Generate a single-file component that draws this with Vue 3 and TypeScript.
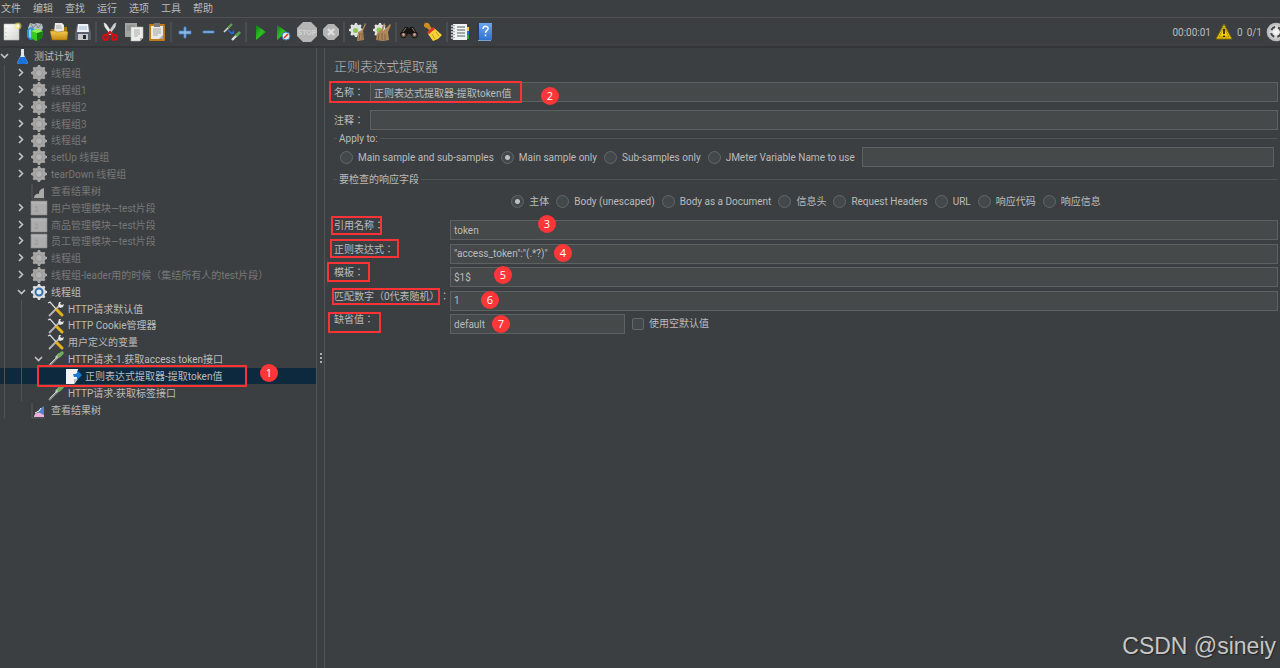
<script setup lang="ts">
import { ref } from 'vue'

interface TreeNode {
  label: string
  depth: number
  icon: string
  state?: 'open' | 'closed'
  off?: boolean
  selected?: boolean
}
interface Box { x: number; y: number; w: number; h: number }
interface Badge { n: number; x: number; y: number }

const menus = ['文件', '编辑', '查找', '运行', '选项', '工具', '帮助']

const tools: { id: string; title: string; text?: string }[][] = [
  [
    { id: 'new', title: '新建' },
    { id: 'templates', title: '模板' },
    { id: 'open', title: '打开' },
    { id: 'save', title: '保存' },
  ],
  [
    { id: 'cut', title: '剪切' },
    { id: 'copy', title: '复制' },
    { id: 'paste', title: '粘贴' },
  ],
  [
    { id: 'plus', title: '全部展开' },
    { id: 'minus', title: '全部折叠' },
    { id: 'toggle', title: '切换' },
  ],
  [
    { id: 'start', title: '启动' },
    { id: 'startnow', title: '不停顿开始' },
    { id: 'stop', title: '停止', text: 'STOP' },
    { id: 'shutdown', title: '关闭' },
  ],
  [
    { id: 'clear', title: '清除' },
    { id: 'clearall', title: '清除全部' },
  ],
  [
    { id: 'search', title: '查找' },
    { id: 'broom', title: '重置搜索' },
  ],
  [
    { id: 'functions', title: '函数助手' },
    { id: 'help', title: '帮助' },
  ],
]

const nodes: TreeNode[] = [
  { label: '测试计划', depth: 0, icon: 'flask', state: 'open' },
  { label: '线程组', depth: 1, icon: 'gearoff', state: 'closed', off: true },
  { label: '线程组1', depth: 1, icon: 'gearoff', state: 'closed', off: true },
  { label: '线程组2', depth: 1, icon: 'gearoff', state: 'closed', off: true },
  { label: '线程组3', depth: 1, icon: 'gearoff', state: 'closed', off: true },
  { label: '线程组4', depth: 1, icon: 'gearoff', state: 'closed', off: true },
  { label: 'setUp 线程组', depth: 1, icon: 'gearoff', state: 'closed', off: true },
  { label: 'tearDown 线程组', depth: 1, icon: 'gearoff', state: 'closed', off: true },
  { label: '查看结果树', depth: 1, icon: 'chartoff', off: true },
  { label: '用户管理模块—test片段', depth: 1, icon: 'fragment', state: 'closed', off: true },
  { label: '商品管理模块—test片段', depth: 1, icon: 'fragment', state: 'closed', off: true },
  { label: '员工管理模块—test片段', depth: 1, icon: 'fragment', state: 'closed', off: true },
  { label: '线程组', depth: 1, icon: 'gearoff', state: 'closed', off: true },
  { label: '线程组-leader用的时候（集结所有人的test片段）', depth: 1, icon: 'gearoff', state: 'closed', off: true },
  { label: '线程组', depth: 1, icon: 'gear', state: 'open' },
  { label: 'HTTP请求默认值', depth: 2, icon: 'wrench' },
  { label: 'HTTP Cookie管理器', depth: 2, icon: 'wrench' },
  { label: '用户定义的变量', depth: 2, icon: 'wrench' },
  { label: 'HTTP请求-1.获取access token接口', depth: 2, icon: 'dropper', state: 'open' },
  { label: '正则表达式提取器-提取token值', depth: 3, icon: 'extract', selected: true },
  { label: 'HTTP请求-获取标签接口', depth: 2, icon: 'dropper' },
  { label: '查看结果树', depth: 1, icon: 'chart' },
]

const scopes = ['Main sample and sub-samples', 'Main sample only', 'Sub-samples only', 'JMeter Variable Name to use']
const targets = ['主体', 'Body (unescaped)', 'Body as a Document', '信息头', 'Request Headers', 'URL', '响应代码', '响应信息']

const scope = ref('Main sample only')
const target = ref('主体')
const name = ref('正则表达式提取器-提取token值')
const comment = ref('')
const variable = ref('')
const emptyDefault = ref(false)

const fields = ref([
  { id: 'refname', label: '引用名称：', value: 'token' },
  { id: 'regex', label: '正则表达式：', value: '"access_token":"(.*?)"' },
  { id: 'template', label: '模板：', value: '$1$' },
  { id: 'match', label: '匹配数字（0代表随机）：', value: '1' },
  { id: 'default', label: '缺省值：', value: 'default' },
])

const boxes: Box[] = [
  { x: 37, y: 365, w: 210, h: 22 },
  { x: 329, y: 81, w: 193, h: 22 },
  { x: 331, y: 216, w: 51, h: 19 },
  { x: 330, y: 239, w: 69, h: 19 },
  { x: 327, y: 262, w: 43, h: 20 },
  { x: 332, y: 288, w: 108, h: 17 },
  { x: 328, y: 312, w: 53, h: 21 },
]
const badges: Badge[] = [
  { n: 1, x: 260, y: 364 },
  { n: 2, x: 541, y: 87 },
  { n: 3, x: 538, y: 215 },
  { n: 4, x: 554, y: 244 },
  { n: 5, x: 494, y: 266 },
  { n: 6, x: 481, y: 291 },
  { n: 7, x: 492, y: 315 },
]
const teeth = [0, 45, 90, 135, 180, 225, 270, 315]
</script>

<template>
  <div class="app">
    <svg class="sprite" aria-hidden="true">
      <defs>
        <linearGradient id="gold" x1="0" y1="0" x2="0" y2="1"><stop offset="0" stop-color="#f3ca52" /><stop offset="1" stop-color="#c48a12" /></linearGradient>
        <linearGradient id="green" x1="0" y1="0" x2="1" y2="1"><stop offset="0" stop-color="#0b7d12" /><stop offset="0.5" stop-color="#2fc022" /><stop offset="1" stop-color="#067a0c" /></linearGradient>
        <linearGradient id="paper" x1="0" y1="0" x2="1" y2="1"><stop offset="0" stop-color="#ffffff" /><stop offset="1" stop-color="#d4d4d0" /></linearGradient>
        <linearGradient id="book" x1="0" y1="0" x2="0" y2="1"><stop offset="0" stop-color="#6ba5ee" /><stop offset="1" stop-color="#2f72cf" /></linearGradient>
        <radialGradient id="ball"><stop offset="0" stop-color="#ffffff" /><stop offset="1" stop-color="#b4b4b4" /></radialGradient>
      </defs>
      <symbol id="i-new" viewBox="0 0 20 20">
        <path d="M2 2h15v16H2z" fill="url(#paper)" stroke="#b9b9b4" stroke-width=".6" />
        <path d="M4 6v10" stroke="#bdbdbd" stroke-dasharray="1 3" />
        <circle cx="16" cy="4" r="3.500" fill="#f3e46b" opacity=".6" /><circle cx="16" cy="4" r="1.700" fill="#fffbd0" />
      </symbol>
      <symbol id="i-templates" viewBox="0 0 20 20">
        <path d="M3 6l2-5 4 1 3-1 5 1 1 4-3 4H5z" fill="#b7bec2" /><path d="M6 2l2 4 3-4 2 4 3-4" fill="none" stroke="#7f898e" />
        <path d="M2 8l4-3 3 2v10l-4 1-3-3z" fill="#2696dd" /><path d="M4 8l2-1v9l-2-1z" fill="#8cd2fb" />
        <path d="M6 9l6-2 6 2-1 7-6 3-5-3z" fill="#35c91e" /><path d="M12 11l6-2-1 7-5 3z" fill="#15800f" /><path d="M6 9l6-2 6 2-6 2z" fill="#8ff05c" />
      </symbol>
      <symbol id="i-open" viewBox="0 0 20 20">
        <path d="M2 7h5l1-2h10v12H3z" fill="#a6760d" /><path d="M6 1h7l2 2v7H5z" fill="#e8e9e7" /><path d="M7 4h5M7 6h6" stroke="#9b9b9b" stroke-width=".8" />
        <path d="M1 9h5l2 1 9-1 2 1-1 8H3z" fill="url(#gold)" stroke="#93660a" stroke-width=".5" />
      </symbol>
      <symbol id="i-save" viewBox="0 0 20 20">
        <path d="M4 2h12l2 9v7H2v-7z" fill="#59626a" /><path d="M5 2h10l1 8H4z" fill="#edf2f7" /><path d="M6 5h8M6 7h8" stroke="#a5bad0" />
        <path d="M5 12h10v6H5z" fill="#c5c7c8" /><path d="M10 13h3v4h-3z" fill="#252a2e" />
      </symbol>
      <symbol id="i-cut" viewBox="0 0 20 20">
        <path d="M4 1l1 4 6 8 1-2L6 2z" fill="#eceded" stroke="#eceded" stroke-width=".6" /><path d="M16 1l-1 4-6 8-1-2 6-9z" fill="#cfd2d3" stroke="#cfd2d3" stroke-width=".6" />
        <circle cx="5.500" cy="15.500" r="2.300" fill="none" stroke="#d60c12" stroke-width="2.200" /><circle cx="14.500" cy="15.500" r="2.300" fill="none" stroke="#d60c12" stroke-width="2.200" />
        <path d="M7 13l3-3 3 3" fill="none" stroke="#d60c12" stroke-width="2" />
      </symbol>
      <symbol id="i-copy" viewBox="0 0 20 20">
        <path d="M1 1h12v14H1z" fill="#a2a4a3" /><path d="M3 4h8M3 6h8M3 8h4" stroke="#777" stroke-width=".8" />
        <path d="M7 5h12v11l-3 3H7z" fill="#ededeb" stroke="#b5b5b2" stroke-width=".6" /><path d="M10 8h6M10 10h6M10 12h6M10 14h4" stroke="#9d9d9b" stroke-width=".8" /><path d="M19 16h-3v3z" fill="#aaa" />
      </symbol>
      <symbol id="i-paste" viewBox="0 0 20 20">
        <rect x="2" y="2" width="16" height="17" rx="1" fill="#c17a19" /><path d="M4 4h12v13H4z" fill="#e9e9e6" /><path d="M7 1h6v4H7z" fill="#777b7b" />
        <path d="M6 7h8M6 9h8M6 11h8M6 13h5" stroke="#969696" stroke-width=".8" /><path d="M16 13v4h-4z" fill="#aaa" />
      </symbol>
      <symbol id="i-plus" viewBox="0 0 20 20"><path d="M9 5h2v4h5v3h-5v4H9v-4H4V9h5z" fill="#8ab6e8" stroke="#4a80c2" stroke-width=".8" /></symbol>
      <symbol id="i-minus" viewBox="0 0 20 20"><path d="M4 9h11v2H4z" fill="#8ab6e8" stroke="#4a80c2" stroke-width=".8" /></symbol>
      <symbol id="i-toggle" viewBox="0 0 20 20">
        <path d="M2 10l7-7" stroke="#d8dbd7" stroke-width="1.600" /><path d="M6 6l4-4" stroke="#58a44c" stroke-width="2.200" />
        <path d="M10 18l6-6" stroke="#d8dbd7" stroke-width="2.400" /><path d="M14 14l4-4" stroke="#58a44c" stroke-width="2.800" />
        <path d="M6 8l4 4" stroke="#2b6bd0" stroke-width="1.500" /><path d="M8 12h4V8z" fill="#2b6bd0" />
      </symbol>
      <symbol id="i-start" viewBox="0 0 20 20"><path d="M6 3l10 7-10 8z" fill="url(#green)" /></symbol>
      <symbol id="i-startnow" viewBox="0 0 20 20">
        <path d="M4 3l10 7-10 8z" fill="url(#green)" /><circle cx="13" cy="14" r="4" fill="#dce9f7" stroke="#377ab5" /><path d="M11 16l4-4" stroke="#e02d1f" stroke-width="1.600" />
      </symbol>
      <symbol id="i-stop" viewBox="0 0 20 20"><path d="M6 0h8l6 6v8l-6 6H6l-6-6V6z" fill="#b5b5b5" /></symbol>
      <symbol id="i-shutdown" viewBox="0 0 20 20"><path d="M7 2h6l5 5v6l-5 5H7l-5-5V7z" fill="#b3b3b3" /><path d="M7 7l6 6M13 7l-6 6" stroke="#dfdfdf" stroke-width="2.400" /></symbol>
      <symbol id="i-clear" viewBox="0 0 20 20">
        <g fill="#dfe1e1"><path v-for="a in teeth" :key="a" d="M6 4l1-3h2l1 3z" :transform="`rotate(${a} 8 8)`" /><circle cx="8" cy="8" r="5.500" /></g>
        <circle cx="7.500" cy="8.500" r="2.500" fill="#8bc54e" /><path d="M17 1l1 1-3 7 1 9-7 1 1-9 4-2z" fill="#ae8858" /><path d="M12 11l-1 7M14 11v7" stroke="#745733" stroke-width=".8" />
      </symbol>
      <symbol id="i-clearall" viewBox="0 0 20 20">
        <g fill="#dfe1e1"><path v-for="a in teeth" :key="a" d="M6 4l1-3h2l1 3z" :transform="`rotate(${a} 8 8)`" /><circle cx="8" cy="8" r="5.500" /></g>
        <circle cx="7" cy="8" r="2.500" fill="#8bc54e" /><path d="M12 1l1 1-2 7 7-7 1 1-3 7 1 8-6 1-7-1 1-7 4-3z" fill="#ae8858" /><path d="M7 12l-1 6M10 11v7M13 12v6" stroke="#745733" stroke-width=".8" />
      </symbol>
      <symbol id="i-search" viewBox="0 0 20 20">
        <path d="M6 5h3l1 2 1-2h3l5 7-4 4-4-4h-2l-4 4-4-4z" fill="#171513" /><path d="M7 6l-3 4M13 6l3 4" stroke="#90786a" />
        <circle cx="4.500" cy="13" r="2.800" fill="#6e5040" stroke="#111" /><circle cx="15.500" cy="13" r="2.800" fill="#6e5040" stroke="#111" /><circle cx="4.500" cy="12.500" r="1.200" fill="#d0b0a0" /><circle cx="15.500" cy="12.500" r="1.200" fill="#d0b0a0" />
      </symbol>
      <symbol id="i-broom" viewBox="0 0 20 20">
        <path d="M2 1c3-1 5 1 5 3l3 4-2 2-4-4C1 6 0 3 2 1z" fill="#c98e27" /><path d="M5 12l6-6 8 7-4 4-5 2z" fill="#f5d13a" /><path d="M4 10l6-5 2 2-6 5z" fill="#dd3526" /><path d="M9 12l3 5M13 10l3 4" stroke="#bd8b12" stroke-width=".8" />
      </symbol>
      <symbol id="i-functions" viewBox="0 0 20 20">
        <path d="M16 5h3v5h-3z" fill="#f0cf32" /><path d="M16 9h3v4h-3z" fill="#2670e6" /><path d="M16 13h3v4h-3z" fill="#27ae36" /><path d="M3 2h14v16H3z" fill="#f1f2f2" />
        <path d="M7 5h8M7 8h8M7 11h8M7 14h8" stroke="#555d63" stroke-width="1.200" /><path d="M1 4h4M1 7h4M1 10h4M1 13h4M1 16h4" stroke="#dadcdc" stroke-width="1.400" /><path d="M4 3v14" stroke="#70777c" stroke-dasharray="1 2" />
      </symbol>
      <symbol id="i-help" viewBox="0 0 20 20">
        <path d="M3 2h3v16H3z" fill="#173e78" /><path d="M5 1h13v17H5z" fill="url(#book)" /><path d="M4 18h13v1H4z" fill="#7fa3cf" />
        <path d="M9 7c0-4 6-3 5 0-.5 1.500-2.500 1.500-2.500 4M11.500 12.500v1.700" fill="none" stroke="#fff" stroke-width="1.500" />
      </symbol>
      <symbol id="i-warning" viewBox="0 0 18 18"><path d="M9 1L1 16h16z" fill="#f4ce0a" stroke="#7d6806" stroke-linejoin="round" /><path d="M9 4L4 14h10z" fill="none" stroke="#806a05" stroke-width=".6" /><path d="M9 6v5M9 12.500v1.500" stroke="#302806" stroke-width="1.800" /></symbol>
      <symbol id="i-engine" viewBox="0 0 20 20"><circle cx="10" cy="10" r="9.300" fill="url(#ball)" /><circle cx="10" cy="10" r="5" fill="none" stroke="#454545" stroke-width="2" stroke-dasharray="4.700 3.154" stroke-dashoffset="-1.600" /></symbol>
      <symbol id="i-flask" viewBox="0 0 18 18"><path d="M8 2h3v6l4 8-2 1H6l-2-1 4-8z" fill="#dbe7f2" /><path d="M7 10h5l3 6-2 1H6l-2-1z" fill="#1774df" /></symbol>
      <symbol id="i-gearoff" viewBox="0 0 18 18">
        <g fill="#a6a6a6"><path v-for="a in teeth" :key="a" d="M7 4l1-3h2l1 3z" :transform="`rotate(${a} 9 9)`" /><circle cx="9" cy="9" r="6.500" /></g><circle cx="9" cy="9" r="3.500" fill="#b2b2b2" stroke="#959595" />
      </symbol>
      <symbol id="i-gear" viewBox="0 0 18 18">
        <g fill="#dedfdf"><path v-for="a in teeth" :key="a" d="M7 4l1-3h2l1 3z" :transform="`rotate(${a} 9 9)`" /><circle cx="9" cy="9" r="6.500" /></g><circle cx="9" cy="9" r="3.500" fill="#dce9f6" stroke="#356fae" stroke-width="2" />
      </symbol>
      <symbol id="i-chartoff" viewBox="0 0 18 18"><path d="M2 2v15h13" fill="none" stroke="#777" stroke-width=".5" /><path d="M4 16c0-3 3-5 5-4 0-4 2-5 5-6v10z" fill="#a9a9a9" /></symbol>
      <symbol id="i-chart" viewBox="0 0 18 18"><path d="M2 2v15h13" fill="none" stroke="#777" stroke-width=".5" /><path d="M8 12c1-4 3-5 6-7v11H8z" fill="#4c83d3" /><path d="M4 16c0-4 4-5 6-4l4 2v2z" fill="#ecb2dc" /><path d="M5 12l4-2 2-3" fill="none" stroke="#fff" /></symbol>
      <symbol id="i-fragment" viewBox="0 0 18 18"><path d="M1 2h16v14H1z" fill="#acacac" stroke="#8c8c8c" stroke-width=".6" /><path d="M1 4h16" stroke="#c6c6c6" stroke-width=".6" /><path d="M5 8h3M4 12h4M7 8v6" stroke="#929292" stroke-width=".8" stroke-dasharray="2 1" /></symbol>
      <symbol id="i-wrench" viewBox="0 0 18 18"><path d="M2 16L12 6" stroke="#b4b6b6" stroke-width="1.800" /><path d="M12 2l-1 4 2 2 3-1 1-3-2 1-2-1 1-2z" fill="#e4e5e5" /><path d="M1 3l2-1 7 8" fill="none" stroke="#dadcdb" stroke-width="1.200" /><path d="M10 10l5 5" stroke="#e5b21c" stroke-width="3" stroke-linecap="round" /></symbol>
      <symbol id="i-dropper" viewBox="0 0 18 18"><path d="M2 16L10 8" stroke="#8f928f" stroke-width="2.200" /><path d="M3 14l6-6" stroke="#d2d4d2" /><path d="M9 8l4-4" stroke="#c3cbc2" stroke-width="3" /><path d="M12 6l3-3" stroke="#6dae58" stroke-width="3.500" stroke-linecap="round" /></symbol>
      <symbol id="i-extract" viewBox="0 0 18 18"><path d="M2 2h12v10l-4 5H2z" fill="#f1f3f4" /><path d="M14 12h-4v5z" fill="#bcbfc1" /><path d="M9 7c2 0 3 0 4-1V3l5 5-5 5v-3h-3z" fill="#1c77ce" /></symbol>
    </svg>

    <nav class="menubar" aria-label="主菜单">
      <button v-for="m in menus" :key="m" type="button" class="menu">{{ m }}</button>
    </nav>

    <div class="toolbar">
      <div class="tools">
        <template v-for="(group, gi) in tools" :key="gi">
          <span v-if="gi > 0" class="sep"></span>
          <button v-for="t in group" :key="t.id" type="button" class="tool" :aria-label="t.title">
            <svg>
              <use :href="`#i-${t.id}`" />
              <text v-if="t.text" x="10" y="13" text-anchor="middle" class="stoptext">{{ t.text }}</text>
            </svg>
          </button>
        </template>
      </div>
      <div class="status">
        <span class="caption">00:00:01</span>
        <svg class="warn"><use href="#i-warning" /></svg>
        <span class="caption">0</span>
        <span class="caption">0/1</span>
        <svg class="engine"><use href="#i-engine" /></svg>
      </div>
    </div>

    <div class="body">
      <aside class="side">
        <ul class="tree">
          <li v-for="(n, i) in nodes" :key="i" class="node" :class="{ off: n.off, selected: n.selected }">
            <span v-for="d in n.depth" :key="d" class="guide"></span>
            <button v-if="n.state" type="button" class="twist" :aria-label="n.label" :aria-expanded="n.state === 'open'">
              <svg viewBox="0 0 10 10"><path :d="n.state === 'open' ? 'M1 3l3.500 3.500L8 3' : 'M2 1l3.500 3.500L2 8'" /></svg>
            </button>
            <span v-else class="twist"></span>
            <svg class="nodeicon"><use :href="`#i-${n.icon}`" /></svg>
            <span class="caption">{{ n.label }}</span>
          </li>
        </ul>
      </aside>

      <div class="splitter"><i></i><i></i><i></i></div>

      <main class="main">
        <h1>正则表达式提取器</h1>
        <div class="line">
          <label for="name" class="caption">名称：</label>
          <input id="name" v-model="name" type="text" class="text" />
        </div>
        <div class="line second">
          <label for="comment" class="caption">注释：</label>
          <input id="comment" v-model="comment" type="text" class="text" />
        </div>

        <fieldset class="apply">
          <legend class="caption">Apply to:</legend>
          <div class="radios inset">
            <label v-for="s in scopes" :key="s" class="radio">
              <input v-model="scope" type="radio" name="scope" :value="s" />
              <span class="caption">{{ s }}</span>
            </label>
            <input v-model="variable" type="text" class="text" aria-label="JMeter Variable Name" />
          </div>
        </fieldset>

        <fieldset class="check">
          <legend class="caption">要检查的响应字段</legend>
          <div class="radios centered">
            <label v-for="t in targets" :key="t" class="radio">
              <input v-model="target" type="radio" name="target" :value="t" />
              <span class="caption">{{ t }}</span>
            </label>
          </div>
        </fieldset>

        <div class="fields">
          <div v-for="f in fields" :key="f.id" class="field">
            <label :for="f.id">{{ f.label }}</label>
            <div class="control">
              <input :id="f.id" v-model="f.value" type="text" class="text" :class="{ short: f.id === 'default' }" />
              <label v-if="f.id === 'default'" class="radio">
                <input v-model="emptyDefault" type="checkbox" />
                <span>使用空默认值</span>
              </label>
            </div>
          </div>
        </div>
      </main>
    </div>

    <div class="marks">
      <span v-for="(b, i) in boxes" :key="i" class="box" :style="{ left: b.x + 'px', top: b.y + 'px', width: b.w + 'px', height: b.h + 'px' }"></span>
      <span v-for="b in badges" :key="b.n" class="badge" :style="{ left: b.x + 'px', top: b.y + 'px' }">{{ b.n }}</span>
    </div>
    <div class="watermark">CSDN @sineiy</div>
  </div>
</template>

<style>
body {
  margin: 0;
  background: #3c3f41;
}
</style>

<style scoped>
.app {
  position: relative;
  display: flex;
  flex-direction: column;
  min-height: 100vh;
  overflow: hidden;
  background: #3c3f41;
  color: #bbbbbb;
  font: 10px/14px Roboto, "Noto Sans CJK SC", sans-serif;
  text-spacing-trim: space-all;
}
.app * {
  box-sizing: border-box;
}
button,
input {
  margin: 0;
  padding: 0;
  border: 0;
  background: none;
  color: inherit;
  font: inherit;
}
svg {
  display: block;
  flex: none;
}
.sprite {
  position: absolute;
  width: 0;
  height: 0;
}
.stoptext {
  font: bold 7px "Liberation Sans", sans-serif;
  fill: #d2d2d2;
}
.caption {
  padding-top: 2px;
}
.menubar {
  display: flex;
  gap: 12px;
  height: 18px;
  padding: 0 1px;
  border-bottom: 1px solid #515151;
}
.toolbar {
  display: flex;
  justify-content: space-between;
  align-items: center;
  height: 30px;
  border-bottom: 2px solid #323436;
}
.tools {
  display: flex;
  align-items: center;
  width: 496px;
}
.tool {
  display: flex;
  flex: 1;
  justify-content: center;
}
.tool svg {
  width: 20px;
  height: 20px;
}
.sep {
  width: 2px;
  height: 20px;
  margin: 0 1px;
  background: #4a4d4f;
}
.status {
  display: flex;
  align-items: center;
  gap: 4px;
  margin-right: -6px;
}
.warn {
  width: 18px;
  height: 18px;
}
.engine {
  width: 20px;
  height: 20px;
}
.body {
  display: flex;
  flex: 1;
}
.side {
  width: 316px;
  flex: none;
}
.tree {
  display: grid;
  grid-auto-rows: 1fr;
  height: 370px;
  margin: 0;
  padding: 0;
  list-style: none;
}
.node {
  display: flex;
  align-items: center;
  min-height: 0;
  white-space: nowrap;
}
.node.off {
  color: #777777;
}
.node.selected {
  background: #0d293e;
}
.guide {
  align-self: stretch;
  width: 13px;
  margin-left: 4px;
  border-left: 1px solid #505355;
}
.twist {
  width: 10px;
  margin-right: 3px;
}
.twist svg {
  width: 10px;
  height: 10px;
}
.twist path {
  fill: none;
  stroke: #c4c4c4;
  stroke-width: 1.6;
}
.nodeicon {
  width: 18px;
  height: 18px;
  margin-right: 3px;
}
.splitter {
  display: flex;
  flex: none;
  flex-direction: column;
  align-items: center;
  justify-content: center;
  gap: 2px;
  width: 9px;
  border: solid #515456;
  border-width: 0 1px;
}
.splitter i {
  width: 2px;
  height: 2px;
  background: #aeb0b1;
}
.main {
  flex: 1;
  min-width: 0;
  padding: 9px 2px 0 9px;
}
h1 {
  margin: 0 0 5px;
  font-size: 13px;
  font-weight: 300;
  line-height: 20px;
}
.line {
  display: flex;
  align-items: center;
  gap: 6px;
}
.second {
  margin-top: 8px;
}
.line > label,
.field > label {
  font-family: Roboto, "Noto Sans CJK TC", sans-serif;
}
.text {
  flex: 1;
  min-width: 0;
  height: 20px;
  padding: 0 3px;
  border: 1px solid #5e6162;
  background: #45494a;
}
fieldset {
  min-width: 0;
  margin: 0;
  border: 0 solid #515456;
  border-top-width: 1px;
}
legend {
  margin-left: 3px;
  padding: 0 2px;
}
.apply {
  padding: 1px 0 4px;
}
.check {
  padding: 4px 0 0;
}
.radios {
  display: flex;
  align-items: center;
  gap: 7px;
  height: 20px;
}
.inset {
  padding: 0 4px 0 6px;
}
.centered {
  justify-content: center;
}
.radio {
  display: flex;
  align-items: center;
  gap: 5px;
  white-space: nowrap;
}
.radio input {
  appearance: none;
  width: 13px;
  height: 13px;
  border: 1px solid #646768;
  background: #43494a;
}
.radio input[type="radio"] {
  border-radius: 50%;
}
.radio input[type="checkbox"] {
  width: 12px;
  height: 12px;
  border-radius: 2px;
}
.radio input[type="radio"]:checked {
  background: radial-gradient(circle, #c0c0c0 0 2px, #43494a 3px);
}
legend.caption {
  padding-top: 2px;
}
.fields {
  display: flex;
  flex-direction: column;
  justify-content: space-between;
  height: 114px;
  margin-top: 9px;
}
.field {
  display: grid;
  grid-template-columns: 116px 1fr;
  align-items: start;
  height: 20px;
}
.field > label {
  line-height: 12px;
}
.control {
  display: flex;
  align-items: center;
  gap: 7px;
}
.short {
  flex: none;
  width: 175px;
}
.box {
  position: absolute;
  border: 2px solid #fb3236;
  pointer-events: none;
}
.badge {
  position: absolute;
  width: 18px;
  height: 18px;
  border-radius: 50%;
  background: #fe3638;
  color: #ffffff;
  font: 11px/18px "Open Sans", sans-serif;
  text-align: center;
}
.watermark {
  position: absolute;
  right: 4px;
  bottom: 8px;
  color: #c6c7c7;
  font: 23px/28px "Liberation Sans", Arial, sans-serif;
  text-shadow: 1px 1px 1px #222222;
}
</style>
